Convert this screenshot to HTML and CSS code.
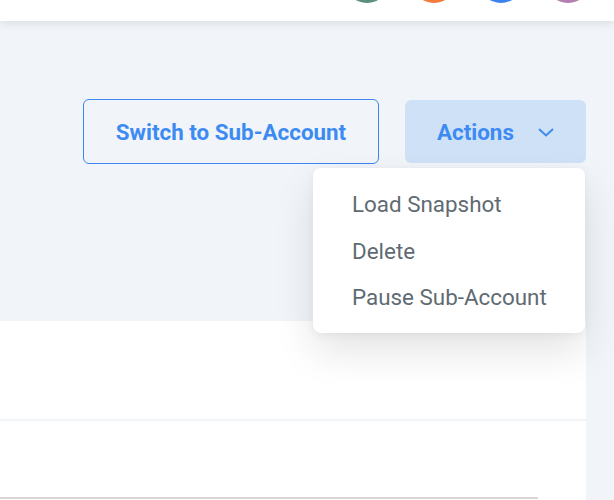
FILE: index.html
```
<!DOCTYPE html>
<html>
<head>
<meta charset="utf-8">
<link rel="stylesheet" href="styles.css">
</head>
<body>
<header class="topbar">
  <div class="avatars">
    <span class="avatar green"></span>
    <span class="avatar orange"></span>
    <span class="avatar blue"></span>
    <span class="avatar purple"></span>
  </div>
</header>
<main class="content">
  <div class="actions-row">
    <button class="btn btn-outline">Switch to Sub-Account</button>
    <div class="dropdown">
      <button class="btn btn-soft">Actions
        <svg class="chevron" width="16" height="9" viewBox="0 0 16 9"><path d="M1 1l7 6.5L15 1" fill="none" stroke="#3d8bf2" stroke-width="2"/></svg>
      </button>
      <ul class="menu">
        <li>Load Snapshot</li>
        <li>Delete</li>
        <li>Pause Sub-Account</li>
      </ul>
    </div>
  </div>
  <section class="panel">
    <div class="panel-top"></div>
    <div class="panel-body"><div class="rule"></div></div>
  </section>
</main>
</body>
</html>
```
FILE: styles.css
```
* { box-sizing: border-box; }
html, body { margin: 0; padding: 0; }
body {
  background: #f1f5f9;
  font-family: Roboto, "Noto Sans", Arial, sans-serif;
  width: 614px;
  height: 500px;
  overflow: hidden;
}
.topbar {
  height: 21px;
  background: #fff;
  box-shadow: 0 3px 8px rgba(0,0,0,0.09);
  display: flex;
  justify-content: flex-end;
  padding-right: 24px;
  position: relative;
  z-index: 1;
}
.avatars {
  display: flex;
  gap: 23px;
  margin-top: -41px;
}
.avatar {
  width: 44px;
  height: 44px;
  border-radius: 50%;
  display: block;
}
.green { background: #5b8e7c; }
.orange { background: #f47b3a; }
.blue { background: #3b82f0; }
.purple { background: #b27db1; }
.content {
  display: flex;
  flex-direction: column;
}
.actions-row {
  display: flex;
  justify-content: flex-end;
  align-items: center;
  gap: 26px;
  padding-right: 28px;
  margin-top: 78px;
  height: 65px;
}
.btn {
  font-family: Roboto, sans-serif;
  font-size: 22.4px;
  font-weight: 700;
  color: #3d8bf2;
  border-radius: 6px;
  cursor: pointer;
}
.btn-outline {
  width: 296px;
  height: 65px;
  background: transparent;
  border: 1px solid #3d86ee;
  padding: 0;
}
.btn-soft {
  width: 181px;
  height: 63px;
  background: #cfe1f7;
  border: none;
  display: flex;
  align-items: center;
  padding: 0 0 0 32px;
  gap: 0;
}
.chevron { margin-left: 24px; margin-top: 2px; }
.dropdown { position: relative; }
.menu {
  position: absolute;
  top: 68px;
  right: 1px;
  width: 272px;
  margin: 0;
  padding: 13px 0 12px 39px;
  list-style: none;
  background: #fff;
  border-radius: 8px;
  box-shadow: 0 18px 40px rgba(0,0,0,0.11), 0 2px 8px rgba(0,0,0,0.05);
  z-index: 5;
}
.menu li {
  font-size: 22.4px;
  line-height: 46.5px;
  color: #5f6b73;
}
.panel {
  margin-top: 157px;
  width: 586px;
  background: #fff;
  display: flex;
  flex-direction: column;
}
.panel-top {
  height: 100px;
  border-bottom: 2px solid #f2f5f8;
}
.panel-body {
  height: 100px;
  padding-top: 76px;
}
.rule {
  width: 538px;
  height: 2px;
  background: #d6d6d6;
}
```
